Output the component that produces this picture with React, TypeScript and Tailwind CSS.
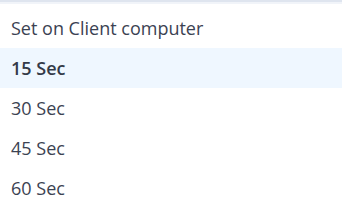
export default function App() {
  const options = ["Set on Client computer", "15 Sec", "30 Sec", "45 Sec", "60 Sec"];
  const selected = "15 Sec";

  return (
    <div
      className="w-[342px] h-[211px] bg-white overflow-hidden"
      style={{ fontFamily: '"Open Sans", "Noto Sans", sans-serif' }}
    >
      <div className="h-[2px] bg-[#dfe5ef]" />
      <div className="h-[2px] bg-[#f1f4f9]" />
      <ul className="pt-[4px]">
        {options.map((o) => (
          <li
            key={o}
            className={
              o === selected
                ? "h-10 flex items-center px-[11px] text-[18px] font-semibold text-[#333a48] bg-[#eff7ff]"
                : "h-10 flex items-center px-[11px] text-[18px] text-[#3b4252]"
            }
          >
            {o}
          </li>
        ))}
      </ul>
    </div>
  );
}
